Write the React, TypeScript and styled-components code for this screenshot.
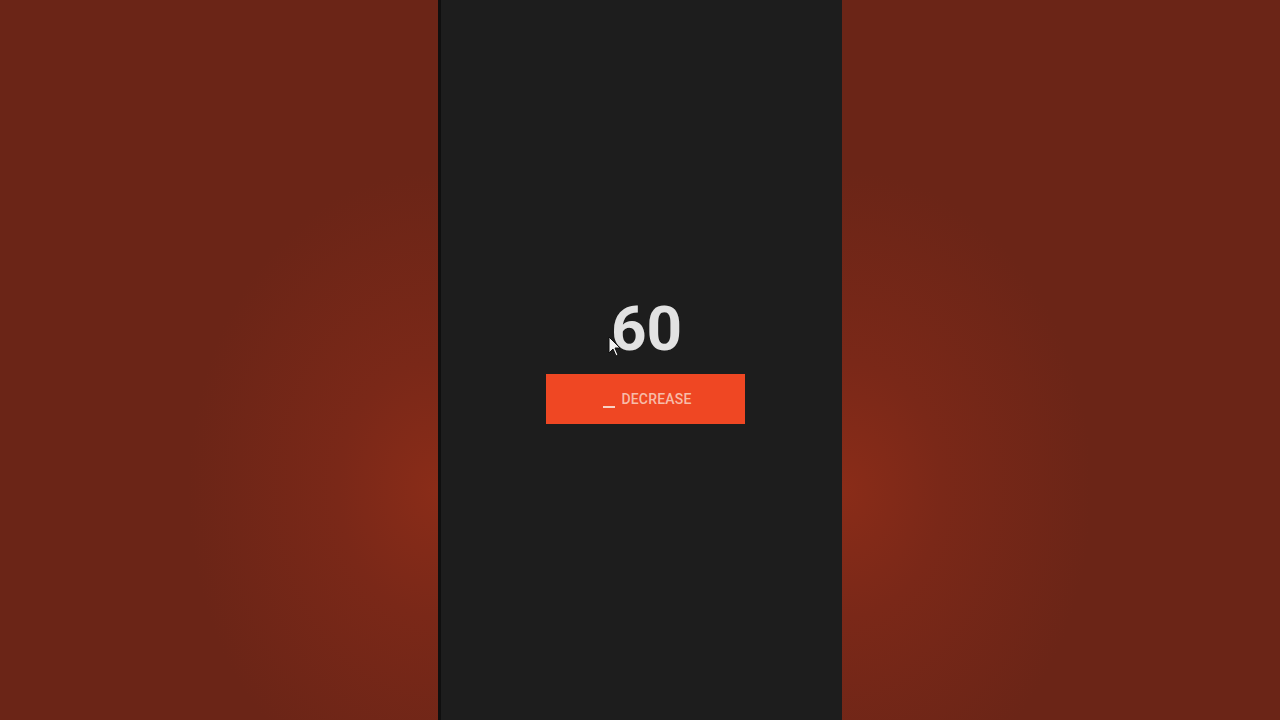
import styled, { createGlobalStyle } from "styled-components";

const GlobalStyle = createGlobalStyle`
  html, body, #root {
    margin: 0;
    height: 100%;
  }
  body {
    font-family: Roboto, "Liberation Sans", sans-serif;
    background: #6a2416;
    overflow: hidden;
  }
`;

const Stage = styled.div`
  display: flex;
  width: 1280px;
  height: 720px;
`;

const Backdrop = styled.div<{ $side: "left" | "right" }>`
  flex: 1;
  background: ${(p) =>
    p.$side === "left"
      ? "radial-gradient(ellipse 250px 320px at 100% 68%, #8a2c18 0%, #7a2818 40%, #6b2517 100%)"
      : "radial-gradient(ellipse 250px 320px at 0% 68%, #8a2c18 0%, #7a2818 40%, #6b2517 100%)"};
`;

const Phone = styled.div`
  position: relative;
  width: 393px;
  border-left: 3px solid #0f0f0f;
  background: #1d1d1d;
  display: flex;
  flex-direction: column;
  align-items: center;
  padding: 298px 0 0 8px;
  box-sizing: content-box;
`;

const Count = styled.div`
  font-size: 62px;
  font-weight: 700;
  line-height: 62px;
  color: #e2e2e2;
  margin-left: 2px;
`;

const DecreaseButton = styled.button`
  margin-top: 14px;
  width: 199px;
  height: 50px;
  border: none;
  background: #ef4723;
  color: #f7bca9;
  font-family: Roboto, "Liberation Sans", sans-serif;
  font-size: 14px;
  font-weight: 500;
  letter-spacing: 0.2px;
  text-transform: uppercase;
  display: flex;
  align-items: center;
  justify-content: center;
  gap: 6px;
  padding: 0 0 0 4px;
  cursor: pointer;
`;

const Minus = styled.span`
  display: inline-block;
  width: 12px;
  height: 2px;
  background: #f8d2c5;
  margin-top: 15px;
`;

const Cursor = styled.svg`
  position: absolute;
  left: 167px;
  top: 336px;
`;

export default function App() {
  return (
    <>
      <GlobalStyle />
      <Stage>
        <Backdrop $side="left" />
        <Phone>
          <Count>60</Count>
          <DecreaseButton>
            <Minus />
            Decrease
          </DecreaseButton>
          <Cursor width="14" height="22" viewBox="0 0 14 22">
            <path d="M1 1 L1 17 L5 13 L8 20 L10 19 L7 12 L12 12 Z" fill="#f2f2f2" stroke="#111" strokeWidth="1" />
          </Cursor>
        </Phone>
        <Backdrop $side="right" />
      </Stage>
    </>
  );
}
